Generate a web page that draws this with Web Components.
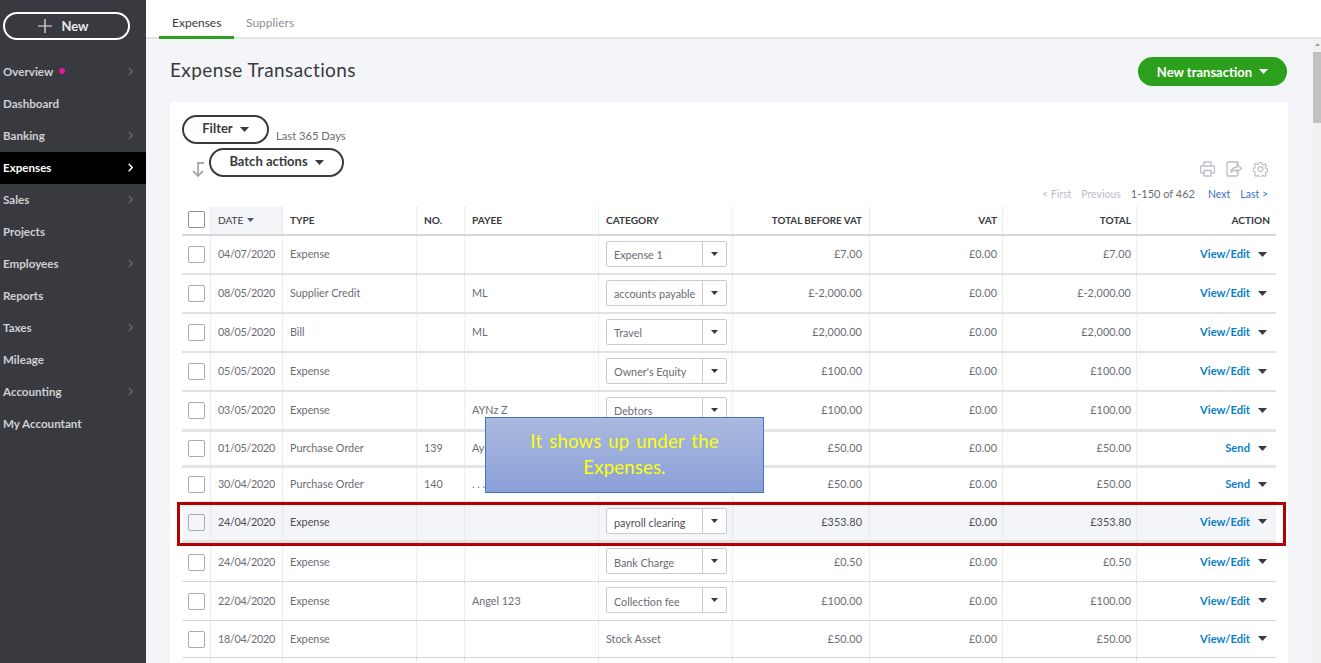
<!DOCTYPE html>
<html>
<head>
<meta charset="utf-8">
<title>Expense Transactions</title>
<style>
    html, body { margin: 0; height: 100%; overflow: hidden; }
    body { font-family: Lato, "Open Sans", sans-serif; background: #f4f5f8; color: #393a3d; }
    #app { display: flex; height: 663px; position: relative; overflow: hidden; }
</style>
</head>
<body>
<div id="app">
    <side-nav></side-nav>
    <main-area></main-area>
    <page-scrollbar></page-scrollbar>
    <call-out>
        It shows up under the<br>Expenses.
    </call-out>
    <row-highlight></row-highlight>
</div>

<script>
const CARET = `<svg width="9" height="5" viewBox="0 0 9 5"><path d="M0 0h9L4.500 5z" fill="currentColor"/></svg>`;

class SideNav extends HTMLElement {
    constructor() {
        super();
        this.attachShadow({ mode: 'open' });
    }

    connectedCallback() {
        const items = [
            ['Overview', true, 'dot'], ['Dashboard'], ['Banking', true], ['Expenses', true, 'active'],
            ['Sales', true], ['Projects'], ['Employees', true], ['Reports'],
            ['Taxes', true], ['Mileage'], ['Accounting', true], ['My Accountant']
        ];
        this.shadowRoot.innerHTML = `
            <style>
                :host { display: block; width: 146px; flex: none; background: #393a3f; color: #cfd0d3; font-size: 11.600px; font-weight: 700; }
                .new {
                    box-sizing: border-box; width: 127px; height: 28px; margin: 12px 0 0 3px;
                    display: flex; align-items: center; justify-content: center; gap: 8px; padding-right: 7px;
                    border: 2px solid #fff; border-radius: 15px; color: #e8e8ea; font-size: 13px;
                }
                nav { margin-top: 16px; }
                .item { box-sizing: border-box; display: flex; align-items: center; height: 32px; padding: 0 13px 2px 3px; }
                .item span { flex: 1; }
                .item i { width: 6px; height: 6px; border-radius: 50%; background: #e6189a; margin: 0 auto 0 4px; }
                .item.dot span { flex: 0 0 52px; }
                .item.active { background: #000; color: #fff; }
                .item svg { color: #62646a; }
                .item.active svg { color: #fff; }
            </style>
            <div class="new">
                <svg width="16" height="16" viewBox="0 0 16 16"><path d="M8 1v14M1 8h14" stroke="#e8e8ea" stroke-width="1.200"/></svg>
                New
            </div>
            <nav>
                ${items.map(([label, more, flag]) => `
                    <div class="item ${flag || ''}">
                        <span>${label}</span>
                        ${flag === 'dot' ? '<i></i>' : ''}
                        ${more ? `<svg width="5" height="9" viewBox="0 0 5 9"><path d="M.7.7 4.200 4.500.7 8.300" fill="none" stroke="currentColor" stroke-width="1.400"/></svg>` : ''}
                    </div>`).join('')}
            </nav>
        `;
    }
}

class TabBar extends HTMLElement {
    constructor() {
        super();
        this.attachShadow({ mode: 'open' });
    }

    connectedCallback() {
        this.shadowRoot.innerHTML = `
            <style>
                :host { display: flex; height: 39px; box-sizing: border-box; background: #fff; border-bottom: 2px solid #e3e5e9; padding-left: 13px; font-size: 12px; }
                div { box-sizing: border-box; height: 39px; padding: 15px 13px 0; }
                .on { color: #393a3d; border-bottom: 3px solid #2ca01c; width: 75px; }
                .off { color: #8d9096; padding-left: 12px; }
            </style>
            <div class="on">Expenses</div>
            <div class="off">Suppliers</div>
        `;
    }
}

class PillButton extends HTMLElement {
    constructor() {
        super();
        this.attachShadow({ mode: 'open' });
    }

    connectedCallback() {
        this.shadowRoot.innerHTML = `
            <style>
                :host { display: inline-flex; box-sizing: border-box; align-items: center; justify-content: center; gap: 7px; height: 29px; border: 2px solid #393a3d; border-radius: 15px; background: #fff; font-size: 13px; font-weight: 700; color: #393a3d; }
                span { position: relative; top: -2px; }
            </style>
            <span><slot></slot></span>${CARET}
        `;
    }
}

class ExpenseRow extends HTMLElement {
    constructor() {
        super();
        this.attachShadow({ mode: 'open' });
    }

    connectedCallback() {
        const a = n => this.getAttribute(n) || '';
        const cat = a('category');
        const categoryCell = a('plain')
            ? cat
            : `<div class="select"><span>${cat}</span><b>${CARET}</b></div>`;
        const filler = this.hasAttribute('filler');
        this.shadowRoot.innerHTML = `
            <style>
                :host { display: grid; grid-template-columns: var(--cols); height: ${a('h') || 39}px; box-sizing: border-box; border-bottom: ${a('line') || '1px solid #d4d7dc'}; font-size: 10.800px; color: #6b6c72; background: ${a('on') ? '#f4f5f8' : '#fff'}; }
                :host([on]) { color: #4d4e53; }
                .c { display: flex; align-items: center; padding: 0 5px 2px 7px; border-right: 1px dotted #dcdee2; min-width: 0; white-space: nowrap; }
                .c.check { padding-bottom: 0; }
                .c.r { justify-content: flex-end; letter-spacing: .1px; }
                .c.tbv { padding-right: 7px; }
                .c.date { letter-spacing: -.3px; }
                .c.last { border-right: 0; padding-right: 9px; }
                .box { box-sizing: border-box; width: 17px; height: 17px; border: 1px solid #a9abb1; border-radius: 2px; background: #fff; margin-left: -1px; }
                :host([on]) .box { background: #f4f5f8; }
                .select { box-sizing: border-box; width: 121px; height: 26px; display: flex; background: #fff; border: 1px solid #c9cbd0; border-radius: 2px; }
                .select span { flex: 1; padding: 2px 0 0 7px; display: flex; align-items: center; }
                .select b { width: 23px; border-left: 1px solid #c9cbd0; display: flex; align-items: center; justify-content: center; color: #393a3d; }
                .select svg { width: 7px; height: 4px; }
                .act { font-size: 11.200px; font-weight: 700; color: #0a7fc7; letter-spacing: 0; }
                .act svg { margin: 1px 0 0 8px; color: #393a3d; }
            </style>
            <div class="c check">${filler ? '' : '<div class="box"></div>'}</div>
            <div class="c date">${a('date')}</div>
            <div class="c">${a('type')}</div>
            <div class="c">${a('no')}</div>
            <div class="c">${a('payee')}</div>
            <div class="c">${categoryCell}</div>
            <div class="c r tbv">${a('before')}</div>
            <div class="c r">${filler ? '' : '£0.00'}</div>
            <div class="c r">${a('before')}</div>
            <div class="c r last">${filler ? '' : `<span class="act">${a('action') || 'View/Edit'}</span><span class="act" style="display:flex">${CARET}</span>`}</div>
        `;
    }
}

class ExpenseTable extends HTMLElement {
    constructor() {
        super();
        this.attachShadow({ mode: 'open' });
    }

    connectedCallback() {
        const thick = '3px solid #e3e5e9';
        const soft = '2px solid #e0e2e5';
        const rows = [
            { date: '04/07/2020', type: 'Expense', category: 'Expense 1', before: '£7.00', line: soft },
            { date: '08/05/2020', type: 'Supplier Credit', payee: 'ML', category: 'accounts payable', before: '£-2,000.00', line: soft },
            { date: '08/05/2020', type: 'Bill', payee: 'ML', category: 'Travel', before: '£2,000.00', line: soft },
            { date: '05/05/2020', type: 'Expense', category: "Owner's Equity", before: '£100.00', line: soft },
            { date: '03/05/2020', type: 'Expense', payee: 'AYNz Z', category: 'Debtors', before: '£100.00', h: 40, line: thick },
            { date: '01/05/2020', type: 'Purchase Order', no: '139', payee: 'Ayn', plain: 1, before: '£50.00', action: 'Send', h: 36, line: thick },
            { date: '30/04/2020', type: 'Purchase Order', no: '140', payee: '. . .', plain: 1, before: '£50.00', action: 'Send', h: 36, line: thick },
            { date: '24/04/2020', type: 'Expense', category: 'payroll clearing', before: '£353.80', on: 1, line: thick },
            { date: '24/04/2020', type: 'Expense', category: 'Bank Charge', before: '£0.50' },
            { date: '22/04/2020', type: 'Expense', payee: 'Angel 123', category: 'Collection fee', before: '£100.00' },
            { date: '18/04/2020', type: 'Expense', category: 'Stock Asset', plain: 1, before: '£50.00', h: 37 },
            { filler: 1, plain: 1 },
        ];
        const esc = s => String(s).replace(/"/g, '&quot;');
        this.shadowRoot.innerHTML = `
            <style>
                :host {
                    display: block;
                    --cols: 29px 72px 134px 48px 134px 134px 137px 133px 134px 139px;
                }
                .head { display: grid; grid-template-columns: var(--cols); height: 29px; box-sizing: border-box; border-bottom: 2px solid #d4d7dc; font-size: 10.100px; font-weight: 700; color: #393a3d; }
                .head div { display: flex; align-items: center; padding: 0 5px 2px 7px; border-right: 1px dotted #dcdee2; }
                .head .r { justify-content: flex-end; }
                .head .tbv { padding-right: 7px; font-size: 9.800px; }
                .head div:last-child { border-right: 0; padding-right: 6px; }
                .head .sort { background: #f4f5f8; font-weight: 400; gap: 4px; }
                .sort svg { color: #3f5b7f; width: 7px; height: 4px; }
                .box { box-sizing: border-box; width: 17px; height: 17px; border: 1px solid #8d9096; border-radius: 2px; margin-left: -1px; }
            </style>
            <div class="head">
                <div><span class="box"></span></div>
                <div class="sort">DATE ${CARET}</div>
                <div>TYPE</div>
                <div>NO.</div>
                <div>PAYEE</div>
                <div>CATEGORY</div>
                <div class="r tbv">TOTAL BEFORE VAT</div>
                <div class="r">VAT</div>
                <div class="r">TOTAL</div>
                <div class="r">ACTION</div>
            </div>
            ${rows.map(r => `<expense-row ${Object.entries(r).map(([k, v]) => `${k}="${esc(v)}"`).join(' ')}></expense-row>`).join('')}
        `;
    }
}

class TableTools extends HTMLElement {
    constructor() {
        super();
        this.attachShadow({ mode: 'open' });
    }

    connectedCallback() {
        this.shadowRoot.innerHTML = `
            <style>
                :host { display: flex; justify-content: space-between; height: 105px; }
                .left { padding-top: 13px; }
                .line { display: flex; align-items: flex-end; }
                .line2 { margin-top: 4px; align-items: flex-start; }
                .range { font-size: 11.200px; color: #6b6c72; margin: 0 0 0 7px; padding-bottom: 2px; }
                .filter { width: 87px; }
                .batch { width: 135px; margin-left: 4px; }
                .sortico { margin: 14px 0 0 9px; }
                .right { padding-top: 59px; margin-right: 8px; }
                .icons { display: flex; justify-content: flex-end; gap: 11px; color: #babec5; height: 26px; }
                .pager { font-size: 10.500px; color: #babec5; display: flex; justify-content: flex-end; align-items: center; }
                .pager span { margin-right: 10px; }
                .pager b { font-weight: 400; font-size: 11px; color: #6b6c72; margin-right: 13px; }
                .pager a { color: #3f6ecb; margin-left: 10px; }
                .pager b + a { margin-left: 0; }
            </style>
            <div class="left">
                <div class="line">
                    <pill-button class="filter">Filter</pill-button>
                    <span class="range">Last 365 Days</span>
                </div>
                <div class="line line2">
                    <svg class="sortico" width="14" height="15" viewBox="0 0 14 15"><path d="M13 1H7v13M2 9l5 5 5-5" fill="none" stroke="#a5a8ae" stroke-width="1.800"/></svg>
                    <pill-button class="batch">Batch actions</pill-button>
                </div>
            </div>
            <div class="right">
                <div class="icons">
                    <svg width="15" height="16" viewBox="0 0 15 16" fill="none" stroke="currentColor" stroke-width="1.300"><path d="M4 5V1h7v4M4 12H1.500a1 1 0 0 1-1-1V6a1 1 0 0 1 1-1h12a1 1 0 0 1 1 1v5a1 1 0 0 1-1 1H11"/><path d="M4 9.500h7V15H4z"/></svg>
                    <svg width="16" height="16" viewBox="0 0 16 16" fill="none" stroke="currentColor" stroke-width="1.300"><path d="M11 15H2a1 1 0 0 1-1-1V2a1 1 0 0 1 1-1h9a1 1 0 0 1 1 1v2M12 11v4"/><path d="M5 11c0-3 3-5 6-5V3.500L15.500 7.500 11 11V9c-2 0-4 .5-6 2z"/></svg>
                    <svg width="15" height="16" viewBox="0 0 16 16" fill="none" stroke="currentColor" stroke-width="1.200"><circle cx="8" cy="8" r="2.600"/><path d="M6.800 1h2.400l.4 2 1.500.7 1.800-1 1.500 1.800-1.200 1.600.4 1.400 1.900.8v2.300l-1.900.6-.5 1.500 1 1.700-1.700 1.500-1.700-1-1.400.6-.5 1.900H6.800l-.5-1.900-1.400-.6-1.700 1-1.700-1.500 1-1.700-.5-1.500L.1 9.900V7.600L2 6.800l.4-1.400-1.200-1.600L2.700 2l1.800 1 1.500-.7z"/></svg>
                </div>
                <div class="pager"><span>&lt; First</span><span>Previous</span><b>1-150 of 462</b><a>Next</a><a>Last &gt;</a></div>
            </div>
        `;
    }
}

class MainArea extends HTMLElement {
    constructor() {
        super();
        this.attachShadow({ mode: 'open' });
    }

    connectedCallback() {
        this.shadowRoot.innerHTML = `
            <style>
                :host { display: block; flex: 1; min-width: 0; overflow: hidden; }
                .top { display: flex; justify-content: space-between; align-items: center; height: 63px; padding: 0 34px 0 24px; }
                h1 { margin: -2px 0 0; font-size: 19px; font-weight: 400; color: #393a3d; letter-spacing: .4px; }
                .go { display: flex; align-items: center; justify-content: center; gap: 7px; width: 149px; height: 29px; margin-top: 2px; border-radius: 15px; background: #2ca01c; color: #fff; font-size: 13px; font-weight: 700; }
                .card { background: #fff; margin: 0 33px 0 24px; padding: 0 12px; height: 570px; }
            </style>
            <tab-bar></tab-bar>
            <div class="top">
                <h1>Expense Transactions</h1>
                <div class="go">New transaction ${CARET}</div>
            </div>
            <div class="card">
                <table-tools></table-tools>
                <expense-table></expense-table>
            </div>
        `;
    }
}

class PageScrollbar extends HTMLElement {
    constructor() {
        super();
        this.attachShadow({ mode: 'open' });
    }

    connectedCallback() {
        this.shadowRoot.innerHTML = `
            <style>
                :host { position: absolute; top: 39px; right: 0; bottom: 0; width: 8px; background: #f1f1f1; }
                .thumb { position: absolute; top: 13px; left: 0; right: 0; height: 71px; background: #c1c1c1; }
                svg { position: absolute; top: 4px; left: 2px; }
            </style>
            <svg width="5" height="3" viewBox="0 0 5 3"><path d="M2.500 0 5 3H0z" fill="#a3a3a3"/></svg>
            <div class="thumb"></div>
        `;
    }
}

class CallOut extends HTMLElement {
    constructor() {
        super();
        this.attachShadow({ mode: 'open' });
    }

    connectedCallback() {
        this.shadowRoot.innerHTML = `
            <style>
                :host { position: absolute; left: 485px; top: 417px; width: 279px; height: 76px; box-sizing: border-box; border: 1px solid #4472c4; background: linear-gradient(#abb9e0, #8aa0d8); color: #ffff00; font: 18.500px/26px Lato, sans-serif; letter-spacing: .2px; word-spacing: 2px; text-align: center; padding-top: 10px; }
            </style>
            <slot></slot>
        `;
    }
}

class RowHighlight extends HTMLElement {
    constructor() {
        super();
        this.attachShadow({ mode: 'open' });
    }

    connectedCallback() {
        this.shadowRoot.innerHTML = `
            <style>
                :host { position: absolute; left: 177px; top: 502px; width: 1109px; height: 44px; box-sizing: border-box; border: 3px solid #b30000; }
            </style>
        `;
    }
}

customElements.define('side-nav', SideNav);
customElements.define('tab-bar', TabBar);
customElements.define('pill-button', PillButton);
customElements.define('expense-row', ExpenseRow);
customElements.define('expense-table', ExpenseTable);
customElements.define('table-tools', TableTools);
customElements.define('main-area', MainArea);
customElements.define('page-scrollbar', PageScrollbar);
customElements.define('call-out', CallOut);
customElements.define('row-highlight', RowHighlight);
</script>
</body>
</html>
